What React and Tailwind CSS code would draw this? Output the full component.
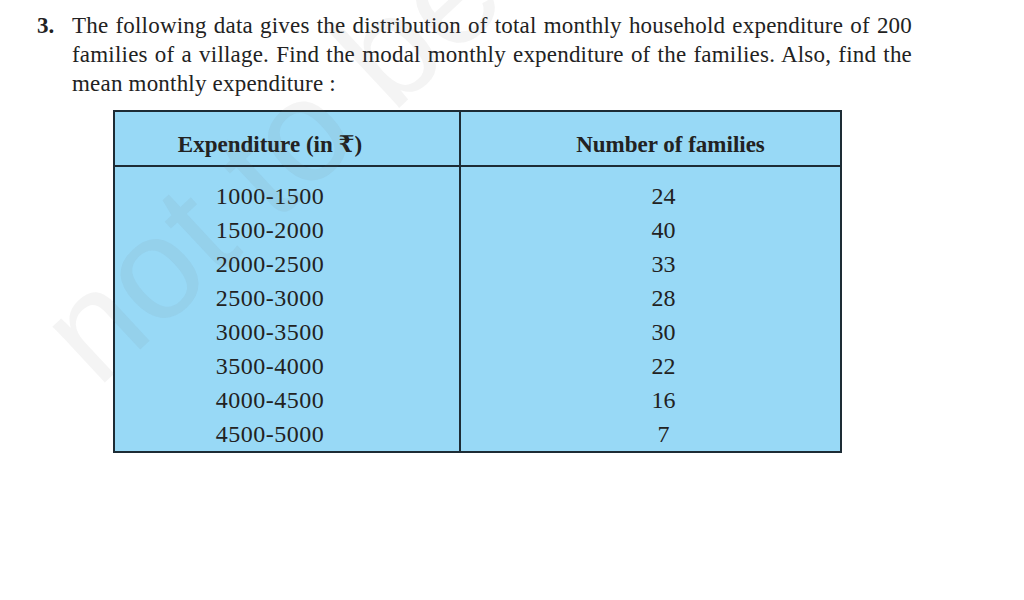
const rows = [
  ["1000 - 1500", "24"],
  ["1500 - 2000", "40"],
  ["2000 - 2500", "33"],
  ["2500 - 3000", "28"],
  ["3000 - 3500", "30"],
  ["3500 - 4000", "22"],
  ["4000 - 4500", "16"],
  ["4500 - 5000", "7"],
]

const serif = "font-['Liberation_Serif','DejaVu_Serif',serif]"

export default function App() {
  return (
    <div className={`relative w-[1024px] h-[600px] overflow-hidden bg-white text-[#222] ${serif}`}>
      <div className="flex pl-[37px] pt-[11px] text-[23px] leading-[29px]">
        <div className="w-[35px] shrink-0 font-bold">3.</div>
        <div className="w-[840px] tracking-[0.2px]">
          <div className="text-justify [text-align-last:justify]">
            The following data gives the distribution of total monthly household expenditure of 200
          </div>
          <div className="text-justify [text-align-last:justify]">
            families of a village. Find the modal monthly expenditure of the families. Also, find the
          </div>
          <div>mean monthly expenditure :</div>
        </div>
      </div>

      <div className="ml-[113px] mt-[12px] w-[729px] border-2 border-[#1d2c35] bg-[#98d9f6]">
        <div className="grid grid-cols-[346px_379px] border-b-2 border-[#1d2c35] text-[23px] font-bold">
          <div className="flex h-[53px] items-center justify-center border-r-2 border-[#1d2c35] pt-[14px] pr-[34px]">
            Expenditure (in ₹)
          </div>
          <div className="flex h-[53px] items-center justify-center pt-[14px] pl-[40px]">
            Number of families
          </div>
        </div>
        <div className="grid grid-cols-[346px_379px] text-[24px]">
          <div className="border-r-2 border-[#1d2c35] pt-[12px] pr-[34px] text-center">
            {rows.map((r) => (
              <div key={r[0]} className="h-[34px] leading-[34px] tracking-[0.5px]">
                {r[0].replace(/ /g, "")}
              </div>
            ))}
          </div>
          <div className="pt-[12px] pl-[26px] text-center">
            {rows.map((r) => (
              <div key={r[0]} className="h-[34px] leading-[34px]">
                {r[1]}
              </div>
            ))}
          </div>
        </div>
      </div>

      <div className="pointer-events-none absolute left-[-20px] top-[88px] w-[580px] -rotate-[43deg] text-center font-['Liberation_Sans',sans-serif] text-[145px] leading-none text-[rgba(110,110,110,0.08)]">
        not to be
      </div>
    </div>
  )
}
